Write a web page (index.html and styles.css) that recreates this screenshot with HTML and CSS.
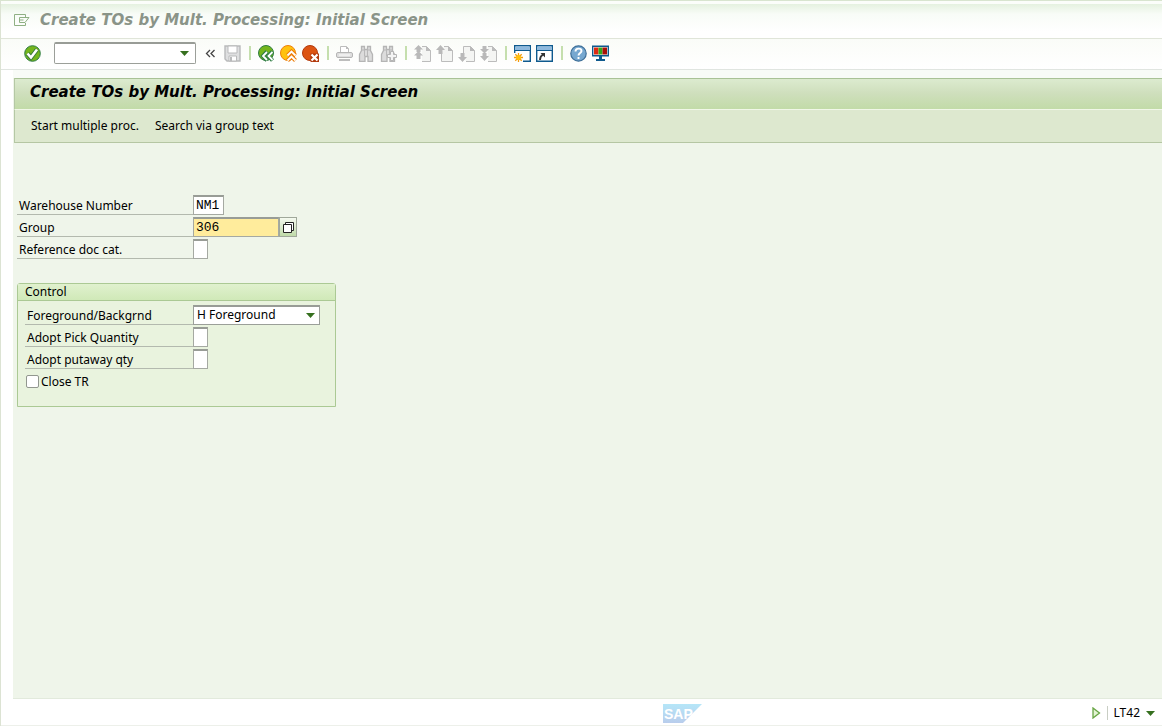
FILE: index.html
```html
<!DOCTYPE html>
<html lang="en">
<head>
  <meta charset="UTF-8">
  <meta name="viewport" content="width=device-width, initial-scale=1.0">
  <title>Create TOs by Mult. Processing: Initial Screen</title>
  <link rel="stylesheet" href="styles.css">
</head>
<body>
  <!-- Shared shapes for the toolbar -->
  <svg class="defs" aria-hidden="true">
    <symbol id="page" viewBox="0 0 17 17">
      <path d="M8 1.500h4.500l4 4V16.500H8" fill="#f4f5f3" stroke="#bcbcbc"/>
      <path d="M12 1v5h5z" fill="#bcbcbc"/>
    </symbol>
    <symbol id="binoculars" viewBox="0 0 17 17">
      <path d="M3.500 1.500h3v3h3v-3h3v4l2 4v7h-4.500v-5h-3v5H1.500v-7l2-4z" fill="#dcdcdc" stroke="#b5b5b5" stroke-width="1.300"/>
      <path d="M3.500 5h3M9.500 5h3M6.500 5v6M9.500 5v6" stroke="#b8b8b8" fill="none"/>
    </symbol>
  </svg>

  <div class="window">
    <header class="window-title">
      <svg class="menu-icon" width="16" height="13" viewBox="0 0 16 13" fill="none" stroke="#8fb083">
        <path d="M11.500 3V.5H.5v11h11V9M5.500 3.500H15L11 8.500H5.500zM5.500 6h4"/>
      </svg>
      <span>Create TOs by Mult. Processing: Initial Screen</span>
    </header>

    <nav class="toolbar" aria-label="System toolbar">
      <button type="button" class="tool" title="Enter">
        <svg viewBox="0 0 17 17"><circle cx="8.500" cy="8.500" r="7.800" fill="#74b51c" stroke="#2f7d44"/><path d="M3.500 8.500l3.500 4 6-8" fill="none" stroke="#39783b" stroke-width="4.400"/><path d="M3.500 8.500l3.500 4 6-8" fill="none" stroke="#fff" stroke-width="2.600"/></svg>
      </button>
      <div class="command">
        <input type="text" aria-label="Command">
        <svg class="arrow" viewBox="0 0 9 5"><path d="M0 0h9L4.500 5z"/></svg>
      </div>
      <button type="button" class="tool" title="Hide command field">
        <svg viewBox="0 0 17 17"><path d="M8 5L4.500 8.500 8 12M12.500 5L9 8.500l3.500 3.500" fill="none" stroke="#444" stroke-width="1.300"/></svg>
      </button>
      <button type="button" class="tool" title="Save" disabled>
        <svg viewBox="0 0 17 17"><path d="M1 1h15v15H3l-2-2z" fill="#dedfe0" stroke="#b9babb" stroke-width="1.400"/><path d="M4 1h9v7H4z" fill="#fff" stroke="#b9babb"/><path d="M5 11h7.500v5H5z" fill="#fff" stroke="#b9babb"/><path d="M6 12h2v4H6z" fill="#b9babb"/></svg>
      </button>
      <span class="separator"></span>
      <button type="button" class="tool" title="Back">
        <svg viewBox="0 0 17 17"><circle cx="8" cy="8" r="7.500" fill="#74b51c" stroke="#2f7d44"/><path d="M9 6.500L5 11l4 4.500M14.500 6.500l-4 4.500 4 4.500" fill="none" stroke="#2f7d44" stroke-width="4"/><path d="M9 7l-4 4 4 4M14.500 7l-4 4 4 4" fill="none" stroke="#fff" stroke-width="1.800"/></svg>
      </button>
      <button type="button" class="tool" title="Exit">
        <svg viewBox="0 0 17 17"><circle cx="8" cy="8" r="7.500" fill="#ffc20e" stroke="#ee7f0c"/><path d="M7.500 10.500l4-4 4 4M7.500 15.500l4-4 4 4" fill="none" stroke="#ee7f0c" stroke-width="4"/><path d="M7.500 10.500l4-4 4 4M7.500 15.500l4-4 4 4" fill="none" stroke="#fff" stroke-width="1.800"/></svg>
      </button>
      <button type="button" class="tool" title="Cancel">
        <svg viewBox="0 0 17 17"><circle cx="8" cy="8" r="7.500" fill="#dc5412" stroke="#b23a0d"/><path d="M8.500 8.500H17V17H8.500z" fill="#b23a0d"/><path d="M9.500 9.500l6 6M15.500 9.500l-6 6" stroke="#fff" stroke-width="2.200"/></svg>
      </button>
      <span class="separator"></span>
      <button type="button" class="tool" title="Print" disabled>
        <svg viewBox="0 0 17 17"><path d="M4.500 8V1.500h6l2 2V8" fill="#fff" stroke="#bcbcbc"/><path d="M10 1v3h3z" fill="#bcbcbc"/><rect x=".5" y="7.500" width="16" height="5" rx="1.500" fill="#dedede" stroke="#b5b5b5"/><path d="M3 10h11" stroke="#fff"/><path d="M3 14h11v2H3z" fill="#bdbdbd"/></svg>
      </button>
      <button type="button" class="tool" title="Find" disabled>
        <svg viewBox="0 0 17 17"><use href="#binoculars"/></svg>
      </button>
      <button type="button" class="tool" title="Find next" disabled>
        <svg viewBox="0 0 17 17"><use href="#binoculars"/><path d="M10.500 6.500h3v3h3v3h-3v3h-3v-3h-3v-3h3z" fill="#f4f4f4" stroke="#b5b5b5"/></svg>
      </button>
      <span class="separator"></span>
      <button type="button" class="tool" title="First page" disabled>
        <svg viewBox="0 0 17 17"><use href="#page"/><path d="M4.500 0L9 4.500H6.500V7H2.500V4.500H0zM4.500 6L9 10.500H6.500V14H2.500V10.500H0z" fill="#b9b9b9"/></svg>
      </button>
      <button type="button" class="tool" title="Previous page" disabled>
        <svg viewBox="0 0 17 17"><path d="M5.500 9v7.500h11v-11l-4-4H8" fill="#f4f5f3" stroke="#bcbcbc"/><path d="M12 1v5h5zM4.500 0L9 5H6.500v4h-4V5H0z" fill="#b9b9b9"/></svg>
      </button>
      <button type="button" class="tool" title="Next page" disabled>
        <svg viewBox="0 0 17 17"><path d="M5.500 8V1.500h7l4 4v11H8" fill="#f4f5f3" stroke="#bcbcbc"/><path d="M12 1v5h5zM2.500 8h4v4H9l-4.500 5L0 12h2.500z" fill="#b9b9b9"/></svg>
      </button>
      <button type="button" class="tool" title="Last page" disabled>
        <svg viewBox="0 0 17 17"><use href="#page"/><path d="M2.500 1h4v3H9L4.500 8.500 0 4h2.500zM2.500 8h4v3H9l-4.500 5L0 11h2.500z" fill="#b9b9b9"/></svg>
      </button>
      <span class="separator"></span>
      <button type="button" class="tool" title="New session">
        <svg viewBox="0 0 17 17"><path d="M.7.700h15.600v15.600H.7z" fill="#fff" stroke="#0f5a8e" stroke-width="1.400"/><path d="M1.400 1.400h14.200V5H1.400z" fill="#8db9de"/><path d="M1 5.500h15" stroke="#0f5a8e"/><path d="M0 8h9v9H0z" fill="#fff"/><path d="M4.500 8v9M0 12.500h9M1.300 9.300l6.400 6.400M7.700 9.300l-6.400 6.400" stroke="#f59b0b" stroke-width="1.300"/><circle cx="4.500" cy="12.500" r="2.500" fill="#ffc20e"/></svg>
      </button>
      <button type="button" class="tool" title="Create shortcut">
        <svg viewBox="0 0 17 17"><path d="M.7.700h15.600v15.600H.7z" fill="#fff" stroke="#0f5a8e" stroke-width="1.400"/><path d="M1.400 1.400h14.200V5H1.400z" fill="#8db9de"/><path d="M1 5.500h15" stroke="#0f5a8e"/><path d="M4 15c0-3 .5-4 3-5.500" fill="none" stroke="#333" stroke-width="1.800"/><path d="M4.500 8H9v4.500z" fill="#333"/></svg>
      </button>
      <span class="separator"></span>
      <button type="button" class="tool" title="Help">
        <svg viewBox="0 0 17 17"><circle cx="8.500" cy="8.500" r="7.700" fill="#77a8d0" stroke="#3f6f98" stroke-width="1.200"/><path d="M5.500 6.500c0-4 6-3.500 6-.5 0 2-3 2-3 4.500M8.500 12v2" fill="none" stroke="#fff" stroke-width="1.900"/></svg>
      </button>
      <button type="button" class="tool" title="Customize local layout">
        <svg viewBox="0 0 17 17"><path d="M.7 1.200h15.600v9.600H.7z" fill="#fff" stroke="#0f5a8e" stroke-width="1.400"/><path d="M2 2.500h4.500v7H2z" fill="#dc2a12"/><path d="M6.500 2.500h4v7h-4z" fill="#35a71b"/><path d="M10.500 2.500H15v7h-4.500z" fill="#a81008"/><path d="M7 11h3v3h3v2H4v-2h3z" fill="#0f5a8e"/></svg>
      </button>
    </nav>

    <main class="workspace">
      <h1 class="screen-title">Create TOs by Mult. Processing: Initial Screen</h1>
      <div class="app-toolbar">
        <button type="button">Start multiple proc.</button>
        <button type="button">Search via group text</button>
      </div>

      <form class="form">
        <div class="row">
          <label for="warehouse">Warehouse Number</label>
          <input class="field short" id="warehouse" type="text" value="NM1">
        </div>
        <div class="row">
          <label for="group">Group</label>
          <input class="field group" id="group" type="text" value="306">
          <button type="button" class="match" title="Possible entries">
            <svg width="13" height="13" viewBox="0 0 13 13" fill="#fff" stroke="#222"><path d="M3.500 1.500h8v8h-8z"/><path d="M1.500 3.500h8v8h-8z"/></svg>
          </button>
        </div>
        <div class="row">
          <label for="refdoc">Reference doc cat.</label>
          <input class="field single" id="refdoc" type="text">
        </div>

        <section class="box">
          <h2>Control</h2>
          <div class="row">
            <label for="mode">Foreground/Backgrnd</label>
            <div class="select">
              <select id="mode">
                <option>H Foreground</option>
                <option>D Background</option>
              </select>
              <svg class="arrow" viewBox="0 0 9 5"><path d="M0 0h9L4.500 5z"/></svg>
            </div>
          </div>
          <div class="row">
            <label for="pick">Adopt Pick Quantity</label>
            <input class="field single" id="pick" type="text">
          </div>
          <div class="row">
            <label for="putaway">Adopt putaway qty</label>
            <input class="field single" id="putaway" type="text">
          </div>
          <div class="check">
            <input id="close-tr" type="checkbox">
            <label for="close-tr">Close TR</label>
          </div>
        </section>
      </form>
    </main>

    <footer class="status">
      <svg class="logo" width="39" height="19" viewBox="0 0 39 19" role="img" aria-label="SAP">
        <defs><linearGradient id="sap" x1="0" y1="0" x2="0" y2="1"><stop offset="0" stop-color="#b5e6f8"/><stop offset="1" stop-color="#b9cdec"/></linearGradient></defs>
        <path d="M0 0h39L20 19H0z" fill="url(#sap)"/>
        <text x="1" y="15">SAP</text>
      </svg>
      <div class="status-info">
        <svg width="9" height="12" viewBox="0 0 9 12"><path d="M1 1v10l6.500-5z" fill="#e3f3d3" stroke="#68a544" stroke-width="1.300"/></svg>
        <span class="status-line"></span>
        <button type="button">LT42 <svg class="arrow" viewBox="0 0 9 5"><path d="M0 0h9L4.500 5z"/></svg></button>
      </div>
    </footer>
  </div>
</body>
</html>
```
FILE: styles.css
```css
* {
  box-sizing: border-box;
}
body {
  margin: 0;
  font-family: "Noto Sans", "Open Sans", sans-serif;
  font-size: 12px;
  line-height: 16px;
  color: #000;
  background-color: #fff;
}
button, input, select {
  margin: 0;
  padding: 0;
  font: inherit;
  color: inherit;
}
button {
  border: 0;
  background: none;
}
.defs {
  position: absolute;
  width: 0;
  height: 0;
}
.window {
  display: flex;
  flex-direction: column;
  min-height: 100vh;
  border-top: 1px solid #d8e4cf;
  border-left: 1px solid #dce3d3;
}

/* Window title */
.window-title {
  display: flex;
  align-items: center;
  gap: 10px;
  height: 38px;
  padding: 0 0 2px 13px;
  border-top: 3px solid #fbfdfa;
  border-bottom: 1px solid #e0e5d9;
  background: linear-gradient(#e5f1e0, #f8fcf7 10px, #fff 28px);
  color: #8a9488;
}
.window-title, .screen-title {
  font-family: "DejaVu Sans", Verdana, sans-serif;
  font-size: 15px;
  font-weight: bold;
  font-style: italic;
  line-height: 20px;
}

/* System toolbar */
.toolbar {
  display: flex;
  align-items: center;
  height: 31px;
  padding: 0 0 2px 21px;
  border-bottom: 1px solid #e0e5e0;
  background: linear-gradient(#fafcf8, #fff);
}
.tool {
  display: flex;
  width: 22px;
  height: 17px;
  padding-left: 2px;
}
.tool svg {
  width: 17px;
  height: 17px;
}
.separator {
  width: 2px;
  height: 14px;
  margin: 0 5px;
  background-color: #c5dfae;
}
.arrow {
  width: 9px;
  height: 5px;
  fill: #36701f;
  pointer-events: none;
}
.command, .select {
  display: flex;
  align-items: center;
  border: 1px solid #9b9f99;
  border-top: 2px solid #989c96;
  background-color: #fff;
}
.command {
  width: 142px;
  height: 22px;
  margin: 0 4px 0 10px;
  padding-right: 6px;
  border-radius: 2px;
}
.command input, .select select {
  flex: 1;
  min-width: 0;
  height: 100%;
  border: 0;
  outline: 0;
  background: none;
  appearance: none;
}

/* Work area */
.workspace {
  flex: 1;
  margin-left: 12px;
  border-top: 8px solid #f8fbf7;
  border-bottom: 1px solid #e2eadc;
  background-color: #eff5ea;
}
.screen-title {
  height: 31px;
  margin: 0 0 0 1px;
  padding: 3px 0 0 15px;
  border-top: 1px solid #a9c296;
  border-left: 1px solid #b5c8a5;
  background: linear-gradient(#dcebcf, #cfdfbd 14px, #c2dba8);
}
.app-toolbar {
  display: flex;
  align-items: center;
  gap: 16px;
  height: 34px;
  margin-left: 1px;
  padding-left: 16px;
  border-top: 1px solid #f1f7e8;
  border-left: 1px solid #b5c8a5;
  border-bottom: 1px solid #b5c6a3;
  background-color: #dde8cf;
}
.form {
  padding: 50px 4px 0;
}
.row {
  display: flex;
  align-items: flex-end;
  height: 22px;
}
.row label {
  width: 176px;
  height: 18px;
  padding: 1px 0 0 2px;
  border-bottom: 1px solid #b3b9ae;
}
.field {
  height: 20px;
  padding: 0 2px;
  border: 1px solid #a5a9a2;
  border-top: 2px solid #989c96;
  outline: 0;
  background-color: #fff;
  font-family: "Liberation Mono", monospace;
  font-size: 13px;
}
.short {
  width: 31px;
}
.group {
  width: 86px;
  background-color: #ffec9c;
}
.single {
  width: 15px;
}
.match {
  display: flex;
  align-items: center;
  justify-content: center;
  width: 18px;
  height: 20px;
  border: 1px solid #a0a89a;
  background: linear-gradient(#f5faf0, #bfdaa8);
}
.box {
  width: 319px;
  margin-top: 24px;
  padding: 0 7px 13px;
  border: 1px solid #abc994;
  border-radius: 3px 3px 0 0;
  background-color: #e9f3de;
}
.box h2 {
  height: 17px;
  margin: 0 -7px 2px;
  padding-left: 7px;
  border-bottom: 1px solid #abc994;
  background: linear-gradient(#e0f1ce, #d0e9b8);
  font-size: 12px;
  font-weight: normal;
  line-height: 16px;
}
.box .row label {
  width: 168px;
}
.select {
  width: 127px;
  height: 20px;
  padding: 0 4px 1px 3px;
}
.check {
  display: flex;
  align-items: center;
  gap: 2px;
  height: 24px;
  padding-left: 1px;
}
.check label {
  padding-top: 1px;
}
.check input {
  width: 13px;
  height: 13px;
  border: 1px solid #92978f;
  border-radius: 2px;
  background-color: #fff;
  appearance: none;
}
.check input:checked {
  background-color: #36701f;
}

/* Status bar */
.status {
  display: grid;
  grid-template-columns: 1fr auto 1fr;
  align-items: center;
  height: 27px;
  padding: 2px 7px 0 209px;
  border-bottom: 1px solid #edf0ea;
}
.logo {
  grid-column: 2;
}
.logo text {
  font-family: "Liberation Sans", Arial, sans-serif;
  font-size: 14px;
  font-weight: bold;
  fill: #fff;
}
.status-info {
  display: flex;
  align-items: center;
  justify-content: flex-end;
  gap: 6px;
}
.status-line {
  width: 1px;
  height: 14px;
  background-color: #c9cec4;
}
.status-info button {
  display: flex;
  align-items: center;
  gap: 6px;
}
```
